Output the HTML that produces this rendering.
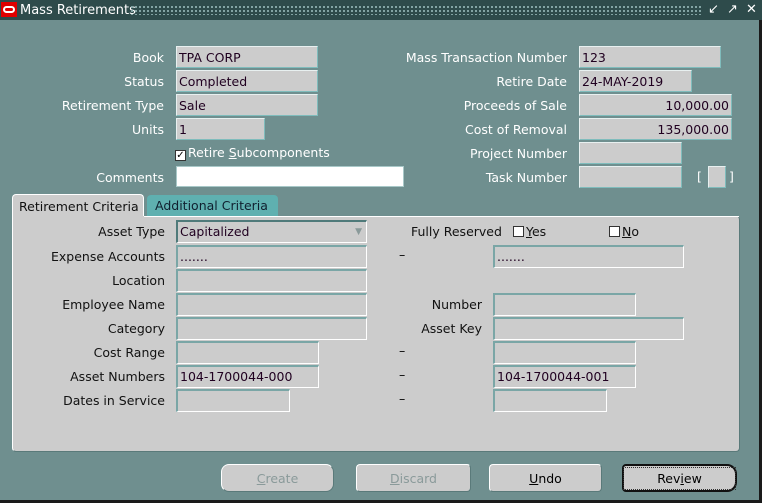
<!DOCTYPE html>
<html><head><style>
*{margin:0;padding:0;box-sizing:border-box}
body{width:762px;height:503px;background:#6f8f8f;font-family:"DejaVu Sans","Liberation Sans",sans-serif;font-size:12.5px;position:relative;overflow:hidden}
.a{position:absolute}
.lbl{position:absolute;color:#fff;text-align:right;white-space:nowrap;line-height:23px}
.lbl2{position:absolute;color:#111;text-align:right;white-space:nowrap;line-height:23px}
.f{position:absolute;background:#cccccc;height:22px;border:1px solid;border-color:#e8f0f0 #7fbcbc #7fbcbc #e8f0f0;color:#200020;line-height:21px;padding:0 2px;white-space:nowrap}
.g{position:absolute;background:#cccccc;height:23px;border:1px solid;border-color:#7aa6a6 #fff #fff #7aa6a6;border-width:2px 1px 1px 2px;color:#200020;line-height:20px;padding:0 2px;white-space:nowrap}
.r{text-align:right}
.btn{position:absolute;top:464px;height:28px;background:#cccccc;border:1px solid;border-color:#fff #5a7a7a #5a7a7a #fff;text-align:center;line-height:27px;border-radius:4px}
.dis{color:#8a9a9a}
.cb{display:inline-block;width:11px;height:11px;background:#fff;border:1px solid #333;vertical-align:-1px;margin-right:2px}
</style></head><body>
<div class="a" style="left:0;top:0;width:762px;height:20px;background:#2e4b4b"></div>
<div class="a" style="left:1px;top:2px;width:16px;height:15px;background:#e00000"><div class="a" style="left:2px;top:4px;width:12px;height:7px;border:2px solid #fff;border-radius:4px"></div></div>
<div class="a" style="left:20px;top:1px;color:#fff;font-size:13px;line-height:19px">Mass Retirements</div>
<div class="a" style="left:130px;top:5px;width:573px;height:10px;background-image:radial-gradient(#8aabab 1px,transparent 1.2px);background-size:4px 4px"></div>
<div class="a" style="left:708px;top:1px;color:#fff;font-size:13px;line-height:18px;letter-spacing:2px">↙ ↗ ✕</div>
<div class="a" style="left:759px;top:20px;width:3px;height:483px;background:#1a1a1a"></div>
<div class="a" style="left:0;top:500px;width:762px;height:3px;background:#1a1a1a"></div>

<div class="lbl" style="right:598px;top:46px">Book</div>
<div class="lbl" style="right:598px;top:70px">Status</div>
<div class="lbl" style="right:598px;top:94px">Retirement Type</div>
<div class="lbl" style="right:598px;top:118px">Units</div>
<div class="lbl" style="right:598px;top:166px">Comments</div>
<div class="f" style="left:176px;top:46px;width:142px">TPA CORP</div>
<div class="f" style="left:176px;top:70px;width:142px">Completed</div>
<div class="f" style="left:176px;top:94px;width:142px">Sale</div>
<div class="f" style="left:176px;top:118px;width:89px">1</div>
<div class="a" style="left:175px;top:142px;color:#fff;line-height:22px"><span class="cb" style="background:#fff;color:#000;font-size:10px;line-height:9px;text-align:center">✓</span>Retire <u>S</u>ubcomponents</div>
<div class="a" style="left:176px;top:166px;width:228px;height:21px;background:#fff;border:1px solid #a8c8c8"></div>

<div class="lbl" style="right:195px;top:46px">Mass Transaction Number</div>
<div class="lbl" style="right:195px;top:70px">Retire Date</div>
<div class="lbl" style="right:195px;top:94px">Proceeds of Sale</div>
<div class="lbl" style="right:195px;top:118px">Cost of Removal</div>
<div class="lbl" style="right:195px;top:142px">Project Number</div>
<div class="lbl" style="right:195px;top:166px">Task Number</div>
<div class="f" style="left:579px;top:46px;width:142px">123</div>
<div class="f" style="left:579px;top:70px;width:113px">24-MAY-2019</div>
<div class="f r" style="left:579px;top:94px;width:153px">10,000.00</div>
<div class="f r" style="left:579px;top:118px;width:153px">135,000.00</div>
<div class="f" style="left:579px;top:142px;width:103px"></div>
<div class="f" style="left:579px;top:166px;width:103px"></div>
<div class="a" style="left:697px;top:166px;color:#fff;line-height:22px">[</div>
<div class="f" style="left:708px;top:166px;width:18px"></div>
<div class="a" style="left:729px;top:166px;color:#fff;line-height:22px">]</div>

<div class="a" style="left:12px;top:194px;width:132px;height:24px;background:#cccccc;border:1px solid #fff;border-bottom:none;border-radius:4px 4px 0 0;color:#111;line-height:23px;padding-left:6px">Retirement Criteria</div>
<div class="a" style="left:147px;top:195px;width:131px;height:21px;background:#5fb0b0;border-radius:4px 4px 0 0;color:#102030;line-height:22px;padding-left:8px">Additional Criteria</div>
<div class="a" style="left:12px;top:216px;width:728px;height:236px;background:#cccccc;border:1px solid;border-color:#fff #5a7a7a #5a7a7a #fff;border-top:none;border-radius:0 4px 4px 4px"></div>
<div class="a" style="left:144px;top:216px;width:595px;height:1px;background:#fff"></div>

<div class="lbl2" style="right:597px;top:220px">Asset Type</div>
<div class="lbl2" style="right:597px;top:245px">Expense Accounts</div>
<div class="lbl2" style="right:597px;top:269px">Location</div>
<div class="lbl2" style="right:597px;top:293px">Employee Name</div>
<div class="lbl2" style="right:597px;top:317px">Category</div>
<div class="lbl2" style="right:597px;top:341px">Cost Range</div>
<div class="lbl2" style="right:597px;top:365px">Asset Numbers</div>
<div class="lbl2" style="right:597px;top:389px">Dates in Service</div>
<div class="g" style="left:176px;top:220px;width:191px;border-color:#4f7a7a #fff #fff #4f7a7a">Capitalized<span class="a" style="right:4px;top:0;color:#8a9a9a;font-size:9px">▼</span></div>
<div class="g" style="left:176px;top:245px;width:191px">.......</div>
<div class="g" style="left:176px;top:269px;width:191px"></div>
<div class="g" style="left:176px;top:293px;width:191px"></div>
<div class="g" style="left:176px;top:317px;width:191px"></div>
<div class="g" style="left:176px;top:341px;width:143px"></div>
<div class="g" style="left:176px;top:365px;width:143px">104-1700044-000</div>
<div class="g" style="left:176px;top:389px;width:114px"></div>

<div class="lbl2" style="left:411px;top:220px">Fully Reserved</div>
<div class="a" style="left:513px;top:220px;line-height:23px;color:#111"><span class="cb"></span><u>Y</u>es</div>
<div class="a" style="left:609px;top:220px;line-height:23px;color:#111"><span class="cb"></span><u>N</u>o</div>
<div class="a" style="left:399px;top:245px;line-height:20px">–</div>
<div class="a" style="left:399px;top:341px;line-height:20px">–</div>
<div class="a" style="left:399px;top:365px;line-height:20px">–</div>
<div class="a" style="left:399px;top:389px;line-height:20px">–</div>
<div class="lbl2" style="right:280px;top:293px">Number</div>
<div class="lbl2" style="right:280px;top:317px">Asset Key</div>
<div class="g" style="left:493px;top:245px;width:191px">.......</div>
<div class="g" style="left:493px;top:293px;width:143px"></div>
<div class="g" style="left:493px;top:317px;width:191px"></div>
<div class="g" style="left:493px;top:341px;width:143px"></div>
<div class="g" style="left:493px;top:365px;width:143px">104-1700044-001</div>
<div class="g" style="left:493px;top:389px;width:114px"></div>

<div class="btn dis" style="left:221px;width:113px;border-radius:8px"><u>C</u>reate</div>
<div class="btn dis" style="left:356px;width:115px"><u>D</u>iscard</div>
<div class="btn" style="left:489px;width:113px"><u>U</u>ndo</div>
<div class="btn" style="left:622px;width:115px;border:2px solid #111;border-radius:4px 10px 10px 4px;line-height:25px"><span style="outline:1px dotted #333;outline-offset:3px;padding:0 30px">Rev<u>i</u>ew</span></div>
</body></html>
